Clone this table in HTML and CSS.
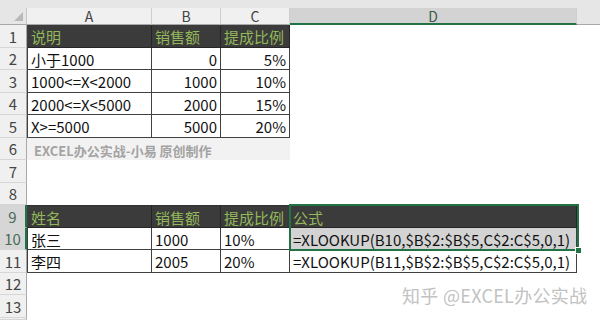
FILE: index.html
```html
<!DOCTYPE html>
<html>
<head>
<meta charset="utf-8">
<link rel="stylesheet" href="styles.css">
</head>
<body>
<div class="app">
  <div class="topstrip"></div>
  <div class="sheet">
    <div class="corner"><span class="tri"></span></div>
    <div class="ch">A</div>
    <div class="ch">B</div>
    <div class="ch">C</div>
    <div class="ch sel">D</div>
    <div class="ch rest"></div>

    <div class="rh">1</div>
    <div class="c dk tl">说明</div>
    <div class="c dk">销售额</div>
    <div class="c dk">提成比例</div>
    <div class="c"></div><div class="c"></div>

    <div class="rh">2</div>
    <div class="c t tl">小于1000</div>
    <div class="c t r">0</div>
    <div class="c t r">5%</div>
    <div class="c"></div><div class="c"></div>

    <div class="rh">3</div>
    <div class="c t tl">1000&lt;=X&lt;2000</div>
    <div class="c t r">1000</div>
    <div class="c t r">10%</div>
    <div class="c"></div><div class="c"></div>

    <div class="rh">4</div>
    <div class="c t tl">2000&lt;=X&lt;5000</div>
    <div class="c t r">2000</div>
    <div class="c t r">15%</div>
    <div class="c"></div><div class="c"></div>

    <div class="rh">5</div>
    <div class="c t tl">X&gt;=5000</div>
    <div class="c t r">5000</div>
    <div class="c t r">20%</div>
    <div class="c"></div><div class="c"></div>

    <div class="rh">6</div>
    <div class="c note">EXCEL办公实战-小易 原创制作</div>
    <div class="c"></div><div class="c"></div>

    <div class="rh">7</div>
    <div class="c"></div><div class="c"></div><div class="c"></div><div class="c"></div><div class="c"></div>

    <div class="rh">8</div>
    <div class="c"></div><div class="c"></div><div class="c"></div><div class="c"></div><div class="c"></div>

    <div class="rh hl">9</div>
    <div class="c dk tl tt">姓名</div>
    <div class="c dk tt">销售额</div>
    <div class="c dk tt">提成比例</div>
    <div class="c dk tt">公式</div>
    <div class="c"></div>

    <div class="rh hl">10</div>
    <div class="c t tl">张三</div>
    <div class="c t">1000</div>
    <div class="c t">10%</div>
    <div class="c t gray">=XLOOKUP(B10,$B$2:$B$5,C$2:C$5,0,1)</div>
    <div class="c"></div>

    <div class="rh">11</div>
    <div class="c t tl">李四</div>
    <div class="c t">2005</div>
    <div class="c t">20%</div>
    <div class="c t">=XLOOKUP(B11,$B$2:$B$5,C$2:C$5,0,1)</div>
    <div class="c"></div>

    <div class="rh">12</div>
    <div class="c"></div><div class="c"></div><div class="c"></div><div class="c"></div><div class="c"></div>

    <div class="rh">13</div>
    <div class="c"></div><div class="c"></div><div class="c"></div><div class="c"></div><div class="c"></div>

    <div class="rh"></div>
    <div class="c"></div><div class="c"></div><div class="c"></div><div class="c"></div><div class="c"></div>

    <div class="selbox"><span class="handle"></span></div>
    <div class="watermark">知乎 @EXCEL办公实战</div>
  </div>
</div>
</body>
</html>
```

FILE: styles.css
```css
* { box-sizing: border-box; }
html, body { margin: 0; padding: 0; background: #fff; }
body {
  width: 600px; height: 320px; overflow: hidden;
  font-family: "Noto Sans CJK SC", "Noto Sans", sans-serif;
}
.app { width: 600px; height: 320px; }
.topstrip { height: 8px; background: #e6e6e6; }
.sheet {
  position: relative;
  display: grid;
  grid-template-columns: 27px 125px 69px 69px 287px 23px;
  grid-template-rows: 17px 23px 22px 23px 22px 23px 22px 23px 22px 23px 22px 23px 22px 23px 2px;
}
.corner {
  position: relative;
  background: #e6e6e6;
  border-right: 1px solid #c8c8c8;
  border-bottom: 1px solid #a8a8a8;
}
.tri {
  position: absolute; right: 3px; bottom: 3px;
  width: 0; height: 0;
  border-left: 9px solid transparent;
  border-bottom: 9px solid #b9b9b9;
}
.ch {
  background: #f0f0f0;
  border-right: 1px solid #cfcfcf;
  border-bottom: 1px solid #a8a8a8;
  color: #444;
  font-size: 14px;
  line-height: 16px;
  text-align: center;
}
.ch.sel {
  background: #d3d3d3;
  border-bottom: 2px solid #217346;
  color: #3a5a48;
}
.ch.rest { background: #e6e6e6; border-right: none; }
.rh {
  background: #f0f0f0;
  border-right: 1px solid #a8a8a8;
  border-bottom: 1px solid #d6d6d6;
  color: #444;
  font-size: 15px;
  display: flex; align-items: flex-end; justify-content: center;
  line-height: 20px;
}
.rh.hl { background: #d6d6d6; color: #4a6a58; border-right: 2px solid #217346; }
.c {
  font-size: 15px;
  color: #111;
  display: flex; align-items: center;
  padding: 1px 3px 0 3px;
  white-space: nowrap;
  overflow: visible;
  min-width: 0;
}
.t {
  border-right: 1px solid #404040;
  border-bottom: 1px solid #404040;
}
.tl { border-left: 1px solid #404040; }
.tt { border-top: 1px solid #303030; }
.dk {
  background: #3b3b3b;
  color: #93b85a;
  border-right: 1px solid #262626;
  border-bottom: 1px solid #262626;
}
.r { justify-content: flex-end; }
.gray { background: #d3d3d3; }
.note {
  grid-column: span 3;
  background: #f2f2f2;
  color: #a3a3a3;
  font-size: 13px;
  font-weight: bold;
  padding-left: 7px;
  padding-top: 2px;
}
.selbox {
  position: absolute;
  left: 289px; top: 196px;
  width: 290px; height: 47px;
  border: 2px solid #217346;
  pointer-events: none;
}
.handle {
  position: absolute;
  right: -5px; bottom: -5px;
  width: 7px; height: 7px;
  background: #217346;
  border: 1px solid #fff;
}
.watermark {
  position: absolute;
  left: 402px; top: 274px;
  font-size: 18px;
  color: #c2c2c2;
  letter-spacing: 0.3px;
  white-space: nowrap;
}
```
